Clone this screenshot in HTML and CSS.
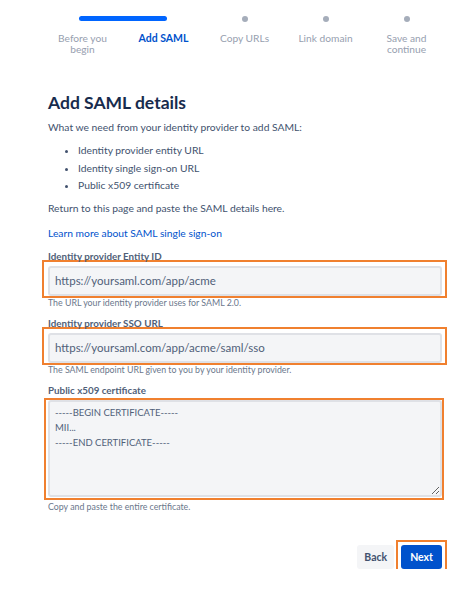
FILE: index.html
```html
<!DOCTYPE html>
<html>
<head>
<meta charset="UTF-8">
<title>Add SAML details</title>
<link rel="stylesheet" href="styles.css">
</head>
<body>
<div class="steps">
	<div class="track track-done"></div>
	<div class="track"><span class="dot"></span></div>
	<div class="track"><span class="dot"></span></div>
	<div class="track"><span class="dot"></span></div>
	<div class="step step-wrap">Before you begin</div>
	<div class="step step-current">Add SAML</div>
	<div class="step">Copy URLs</div>
	<div class="step">Link domain</div>
	<div class="step step-wrap">Save and continue</div>
</div>

<div class="page">
	<h1 class="title">Add SAML details</h1>
	<p class="text">What we need from your identity provider to add SAML:</p>
	<ul class="needs">
		<li>Identity provider entity URL</li>
		<li>Identity single sign-on URL</li>
		<li>Public x509 certificate</li>
	</ul>
	<p class="text text-return">Return to this page and paste the SAML details here.</p>
	<p class="text text-link"><a class="link" href="#">Learn more about SAML single sign-on</a></p>

	<div class="field">
		<label class="label" for="txtEntity">Identity provider Entity ID</label>
		<div class="mark">
			<input id="txtEntity" class="input" type="text" value="https://yoursaml.com/app/acme">
		</div>
		<div class="help">The URL your identity provider uses for SAML 2.0.</div>
	</div>
	<div class="field">
		<label class="label" for="txtSso">Identity provider SSO URL</label>
		<div class="mark">
			<input id="txtSso" class="input" type="text" value="https://yoursaml.com/app/acme/saml/sso">
		</div>
		<div class="help">The SAML endpoint URL given to you by your identity provider.</div>
	</div>
	<div class="field">
		<label class="label" for="txtCert">Public x509 certificate</label>
		<div class="mark mark-area">
			<textarea id="txtCert" class="input area">-----BEGIN CERTIFICATE-----
MII...
-----END CERTIFICATE-----</textarea>
		</div>
		<div class="help help-area">Copy and paste the entire certificate.</div>
	</div>

	<div class="actions">
		<button class="btn btn-back">Back</button>
		<div class="mark mark-btn">
			<button class="btn btn-next">Next</button>
		</div>
	</div>
</div>
</body>
</html>
```

FILE: styles.css
```css
body{
	margin:0;
	background:#fff;
	font-family:Lato, "Noto Sans", sans-serif;
	color:#42526E;
}
.steps{
	display:grid;
	grid-template-columns:repeat(5, 81px);
	margin:16px 0 0 42px;
	row-gap:12px;
}
.track{
	height:5px;
	display:flex;
	justify-content:center;
	align-items:center;
}
.track-done{
	grid-column:span 2;
	margin:0 37px;
	background:#0065FF;
	border-radius:3px;
}
.dot{
	width:6px;
	height:6px;
	border-radius:50%;
	background:#A5ADBA;
}
.step{
	font-size:10.2px;
	line-height:11px;
	text-align:center;
	color:#97A0AF;
}
.step-wrap{
	padding:0 14px;
}
.step-current{
	color:#0052CC;
	font-weight:700;
	font-size:10.5px;
}
.page{
	width:394px;
	margin:36px 0 0 48px;
}
.title{
	margin:0;
	font-size:17.5px;
	line-height:24px;
	font-weight:700;
	color:#172B4D;
}
.text{
	margin:4px 0 0;
	font-size:10.3px;
	line-height:18px;
}
.title + .text{
	margin-top:3px;
}
.text-return{
	margin-top:4px;
}
.text-link{
	margin-top:7px;
}
.needs{
	margin:6px 0 0;
	padding-left:30px;
	font-size:10.3px;
	line-height:17.5px;
}
.link{
	color:#0052CC;
	text-decoration:none;
}
.field{
	margin-top:8px;
}
.label{
	display:block;
	font-size:9.8px;
	line-height:12px;
	font-weight:700;
	color:#505F79;
}
.mark{
	border:2px solid #F0802F;
	padding:4px 3px 0 4px;
	margin:-2px -5px -2px -6px;
}
.mark-area{
	padding:0 0 1px 2px;
	margin:2px -2px -3px -4px;
}
.input{
	display:block;
	box-sizing:border-box;
	width:394px;
	height:30px;
	padding:0 5px;
	border:2px solid #DFE1E6;
	border-radius:3px;
	background:#F4F5F7;
	font-family:inherit;
	font-size:11.5px;
	color:#505F79;
}
.area{
	height:97px;
	padding:3px 5px;
	font-size:9.5px;
	line-height:15px;
	resize:vertical;
}
.help{
	margin-top:1px;
	font-size:8.8px;
	line-height:12px;
	color:#6B778C;
}
.help-area{
	margin-top:4px;
}
.actions{
	display:flex;
	justify-content:flex-end;
	align-items:center;
	gap:2px;
	margin-top:32px;
}
.mark-btn{
	padding:3px;
	margin:-5px -5px -5px 0;
}
.btn{
	display:block;
	height:24px;
	padding:0 7px;
	border:0;
	border-radius:3px;
	font-family:inherit;
	font-size:10.5px;
	font-weight:700;
}
.btn-back{
	background:#F4F5F7;
	color:#42526E;
}
.btn-next{
	background:#0052CC;
	color:#fff;
	padding:0 9px;
}
```
